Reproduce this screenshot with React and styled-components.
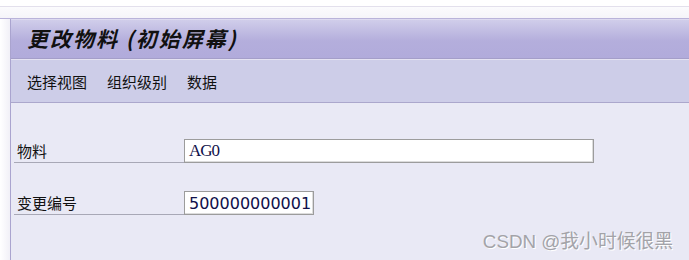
import styled, { createGlobalStyle } from 'styled-components';

const GlobalStyle = createGlobalStyle`
  html, body {
    margin: 0;
    padding: 0;
    background: #ffffff;
  }
  * { box-sizing: border-box; }
`;

const Page = styled.div`
  position: relative;
  width: 689px;
  height: 260px;
  overflow: hidden;
  font-family: "Noto Sans CJK SC", "Noto Sans", sans-serif;
  background: #ffffff;
`;

// strip at the very top
const TopGap = styled.div`
  height: 7px;
  background: #ffffff;
  border-bottom: 1px solid #e3e0ec;
`;

const Band = styled.div`
  height: 12px;
  background: linear-gradient(#fbfbfd, #f5f4f9);
  border-bottom: 1px solid #b9b3da;
`;

const Body = styled.div`
  display: flex;
  height: 241px;
`;

const Gutter = styled.div`
  width: 10px;
  background: linear-gradient(90deg, #ffffff, #f1f0f7);
`;

const Panel = styled.div`
  flex: 1;
  display: flex;
  flex-direction: column;
  border-left: 1px solid #aaa4cf;
`;

///title bar
const TitleBar = styled.div`
  flex-shrink: 0;
  height: 40px;
  display: flex;
  align-items: center;
  padding-left: 16px;
  border-top: 1px solid #dddaf0;
  border-bottom: 1px solid #a49ec9;
  background: linear-gradient(#d0cdea 0%, #b4aedc 55%, #b1abdb 100%);
`;

const Title = styled.h1`
  margin: 0;
  font-size: 21px;
  font-weight: 700;
  font-style: italic;
  letter-spacing: 2px;
  color: #111111;
  padding-bottom: 2px;
`;

///menu bar
const MenuBar = styled.div`
  flex-shrink: 0;
  height: 44px;
  display: flex;
  align-items: center;
  gap: 20px;
  padding-left: 16px;
  background: #cdcde8;
  border-top: 1px solid #e4e2f2;
  border-bottom: 1px solid #aba7cc;
`;

const MenuItem = styled.span`
  font-size: 15px;
  color: #111111;
  cursor: pointer;
`;

///form
const Content = styled.div`
  flex: 1;
  background: #e9e9f5;
  padding: 36px 0 0 3px;
  display: flex;
  flex-direction: column;
  gap: 28px;
`;

const Row = styled.div`
  display: flex;
  align-items: stretch;
  height: 24px;
`;

const Label = styled.label`
  width: 170px;
  display: flex;
  align-items: center;
  padding-left: 3px;
  font-size: 15px;
  color: #111111;
  border-bottom: 1px solid #a8a8b6;
`;

const Field = styled.div`
  width: ${props => props.w}px;
  height: 24px;
  background: #ffffff;
  border: 1px solid #9c9c9c;
  box-shadow: inset -1px -1px 0 #dcdcdc;
  display: flex;
  align-items: center;
  padding-left: 4px;
  font-family: ${props => props.serif ? '"Liberation Serif", serif' : '"DejaVu Sans", sans-serif'};
  font-size: ${props => props.serif ? '17px' : '16px'};
  letter-spacing: ${props => props.serif ? '-1px' : '0'};
  color: #10104a;
`;

const Watermark = styled.div`
  position: absolute;
  right: 16px;
  bottom: 7px;
  font-family: "Liberation Sans", "Noto Sans CJK SC", sans-serif;
  font-size: 18.8px;
  color: #a3a3a8;
  text-shadow: 1px 1px 0 #ffffff;
`;

const App = () => {
  return (
    <Page>
      <GlobalStyle />
      <TopGap />
      <Band />
      <Body>
        <Gutter />
        <Panel>
          <TitleBar>
            <Title>更改物料 (初始屏幕)</Title>
          </TitleBar>
          <MenuBar>
            <MenuItem>选择视图</MenuItem>
            <MenuItem>组织级别</MenuItem>
            <MenuItem>数据</MenuItem>
          </MenuBar>
          <Content>
            <Row>
              <Label>物料</Label>
              <Field w={410} serif>AG0</Field>
            </Row>
            <Row>
              <Label>变更编号</Label>
              <Field w={130}>500000000001</Field>
            </Row>
          </Content>
        </Panel>
      </Body>
      <Watermark>CSDN @我小时候很黑</Watermark>
    </Page>
  );
};

export default App;
